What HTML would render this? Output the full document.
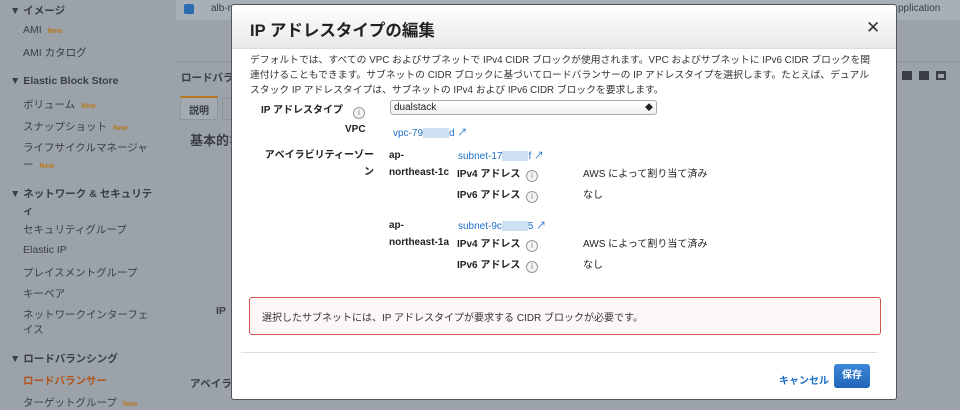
<!DOCTYPE html>
<html><head><meta charset="utf-8"><style>
*{margin:0;padding:0;box-sizing:border-box}
body{width:960px;height:408px;overflow:hidden;background:#9ba2aa;font-family:"Liberation Sans","Noto Sans CJK JP",sans-serif;color:#2a2f35;position:relative}
.a{position:absolute;white-space:nowrap}
.sb{font-size:10.5px;color:#3a3f45}
.h{font-weight:bold}
.new{color:#b8791e;font-size:7px;font-weight:bold;margin-left:6px}
#m{position:absolute;left:231px;top:4px;width:666px;height:396px;background:#fff;border:1px solid #555;border-radius:3px;overflow:hidden}
#hd{height:44px;background:linear-gradient(#fff,#e8e8e8);border-bottom:1px solid #ddd}
.m{font-size:10px;color:#222}
.b{font-weight:bold}
.lk{color:#1e6fc8}
.i{display:inline-block;width:12px;height:12px;border:1px solid #999;border-radius:50%;font-size:8px;text-align:center;line-height:10px;color:#777;background:#f5f5f5}
.blur{display:inline-block;width:26px;height:10px;background:#cfe0f3;vertical-align:middle}
</style></head><body>
<div class="a sb h" style="left:10px;top:3px">▼ イメージ</div>
<div class="a sb" style="left:23px;top:24px">AMI<span class="new">New</span></div>
<div class="a sb" style="left:23px;top:45px">AMI カタログ</div>
<div class="a sb h" style="left:10px;top:75px">▼ Elastic Block Store</div>
<div class="a sb" style="left:23px;top:97px">ボリューム<span class="new">New</span></div>
<div class="a sb" style="left:23px;top:119px">スナップショット<span class="new">New</span></div>
<div class="a sb" style="left:23px;top:140px">ライフサイクルマネージャ</div>
<div class="a sb" style="left:23px;top:157px">ー<span class="new">New</span></div>
<div class="a sb h" style="left:10px;top:186px">▼ ネットワーク &amp; セキュリテ</div>
<div class="a sb h" style="left:23px;top:203px">ィ</div>
<div class="a sb" style="left:23px;top:222px">セキュリティグループ</div>
<div class="a sb" style="left:23px;top:244px">Elastic IP</div>
<div class="a sb" style="left:23px;top:265px">プレイスメントグループ</div>
<div class="a sb" style="left:23px;top:286px">キーペア</div>
<div class="a sb" style="left:23px;top:307px">ネットワークインターフェ</div>
<div class="a sb" style="left:23px;top:322px">イス</div>
<div class="a sb h" style="left:10px;top:351px">▼ ロードバランシング</div>
<div class="a sb h" style="left:23px;top:373px;color:#b0561c">ロードバランサー</div>
<div class="a sb" style="left:23px;top:395px">ターゲットグループ<span class="new">New</span></div>
<div class="a" style="left:176px;top:0;width:784px;height:20px;background:#a7afb8"></div>
<div class="a" style="left:184px;top:4px;width:10px;height:10px;background:#2c6db0;border-radius:2px"></div>
<div class="a sb" style="left:211px;top:3px;font-size:10px">alb-n</div>
<div class="a sb" style="left:898px;top:3px;font-size:10px">pplication</div>
<div class="a" style="left:176px;top:61px;width:784px;height:1px;background:#8e959c"></div>
<div class="a sb h" style="left:181px;top:70px">ロードバラ</div>
<div class="a" style="left:902px;top:71px;width:10px;height:9px;background:#3a3f45"></div>
<div class="a" style="left:919px;top:71px;width:10px;height:9px;background:#3a3f45"></div>
<div class="a" style="left:936px;top:71px;width:10px;height:9px;border:2px solid #3a3f45;border-top-width:3px"></div>
<div class="a" style="left:180px;top:96px;width:38px;height:24px;border:1px solid #8e959c;border-top:2px solid #b8791e;background:#a3aab2"></div>
<div class="a sb h" style="left:189px;top:102px;font-size:10px">説明</div>
<div class="a" style="left:222px;top:98px;width:10px;height:22px;border:1px solid #8e959c"></div>
<div class="a sb h" style="left:190px;top:130px;font-size:13px">基本的な</div>
<div class="a sb h" style="left:216px;top:305px">IP</div>
<div class="a sb h" style="left:190px;top:376px">アベイラ</div>
<div id="m">
<div id="hd"><div class="a" style="left:18px;top:12px;font-size:16.5px;font-weight:bold;color:#222">IP アドレスタイプの編集</div>
<div class="a" style="left:634px;top:13px;font-size:17px;color:#333">✕</div></div>
<div class="a m" style="left:18px;top:48px;line-height:15px;color:#333;font-size:9.8px">デフォルトでは、すべての VPC およびサブネットで IPv4 CIDR ブロックが使用されます。VPC およびサブネットに IPv6 CIDR ブロックを関<br>連付けることもできます。サブネットの CIDR ブロックに基づいてロードバランサーの IP アドレスタイプを選択します。たとえば、デュアル<br>スタック IP アドレスタイプは、サブネットの IPv4 および IPv6 CIDR ブロックを要求します。</div>
<div class="a m b" style="left:29px;top:96px">IP アドレスタイプ</div>
<div class="a" style="left:121px;top:97px"><span class="i">i</span></div>
<div class="a m" style="left:158px;top:95px;width:267px;height:15px;border:1px solid #aaa;border-radius:3px;background:linear-gradient(#fff,#f0f0f0);padding-left:3px;line-height:13px">dualstack<span style="position:absolute;right:3px;font-size:8px">◆</span></div>
<div class="a m b" style="left:113px;top:119px">VPC</div>
<div class="a m lk" style="left:161px;top:119px">vpc-79<span class="blur"></span>d ↗</div>
<div class="a m b" style="left:20px;top:142px;width:122px;text-align:right;line-height:17px">アベイラビリティーゾー<br>ン</div>
<div class="a m b" style="left:157px;top:142px;line-height:17px">ap-<br>northeast-1c</div>
<div class="a m lk" style="left:226px;top:142px">subnet-17<span class="blur"></span>f ↗</div>
<div class="a m b" style="left:225px;top:160px">IPv4 アドレス</div><div class="a" style="left:294px;top:160px"><span class="i">i</span></div>
<div class="a m" style="left:351px;top:160px">AWS によって割り当て済み</div>
<div class="a m b" style="left:225px;top:181px">IPv6 アドレス</div><div class="a" style="left:294px;top:181px"><span class="i">i</span></div>
<div class="a m" style="left:351px;top:181px">なし</div>
<div class="a m b" style="left:157px;top:212px;line-height:17px">ap-<br>northeast-1a</div>
<div class="a m lk" style="left:226px;top:212px">subnet-9c<span class="blur"></span>5 ↗</div>
<div class="a m b" style="left:225px;top:230px">IPv4 アドレス</div><div class="a" style="left:294px;top:230px"><span class="i">i</span></div>
<div class="a m" style="left:351px;top:230px">AWS によって割り当て済み</div>
<div class="a m b" style="left:225px;top:251px">IPv6 アドレス</div><div class="a" style="left:294px;top:251px"><span class="i">i</span></div>
<div class="a m" style="left:351px;top:251px">なし</div>
<div class="a" style="left:17px;top:292px;width:632px;height:38px;border:1px solid #d9534f;border-radius:3px;background:#fdf8f7"></div>
<div class="a m" style="left:30px;top:304px;color:#333">選択したサブネットには、IP アドレスタイプが要求する CIDR ブロックが必要です。</div>
<div class="a" style="left:9px;top:347px;width:636px;height:1px;background:#ddd"></div>
<div class="a m b lk" style="left:547px;top:367px">キャンセル</div>
<div class="a m b" style="left:602px;top:359px;width:36px;height:24px;background:linear-gradient(#3d87d8,#1f64b8);border-radius:3px;color:#fff;text-align:center;line-height:24px">保存</div>
</div>
</body></html>
